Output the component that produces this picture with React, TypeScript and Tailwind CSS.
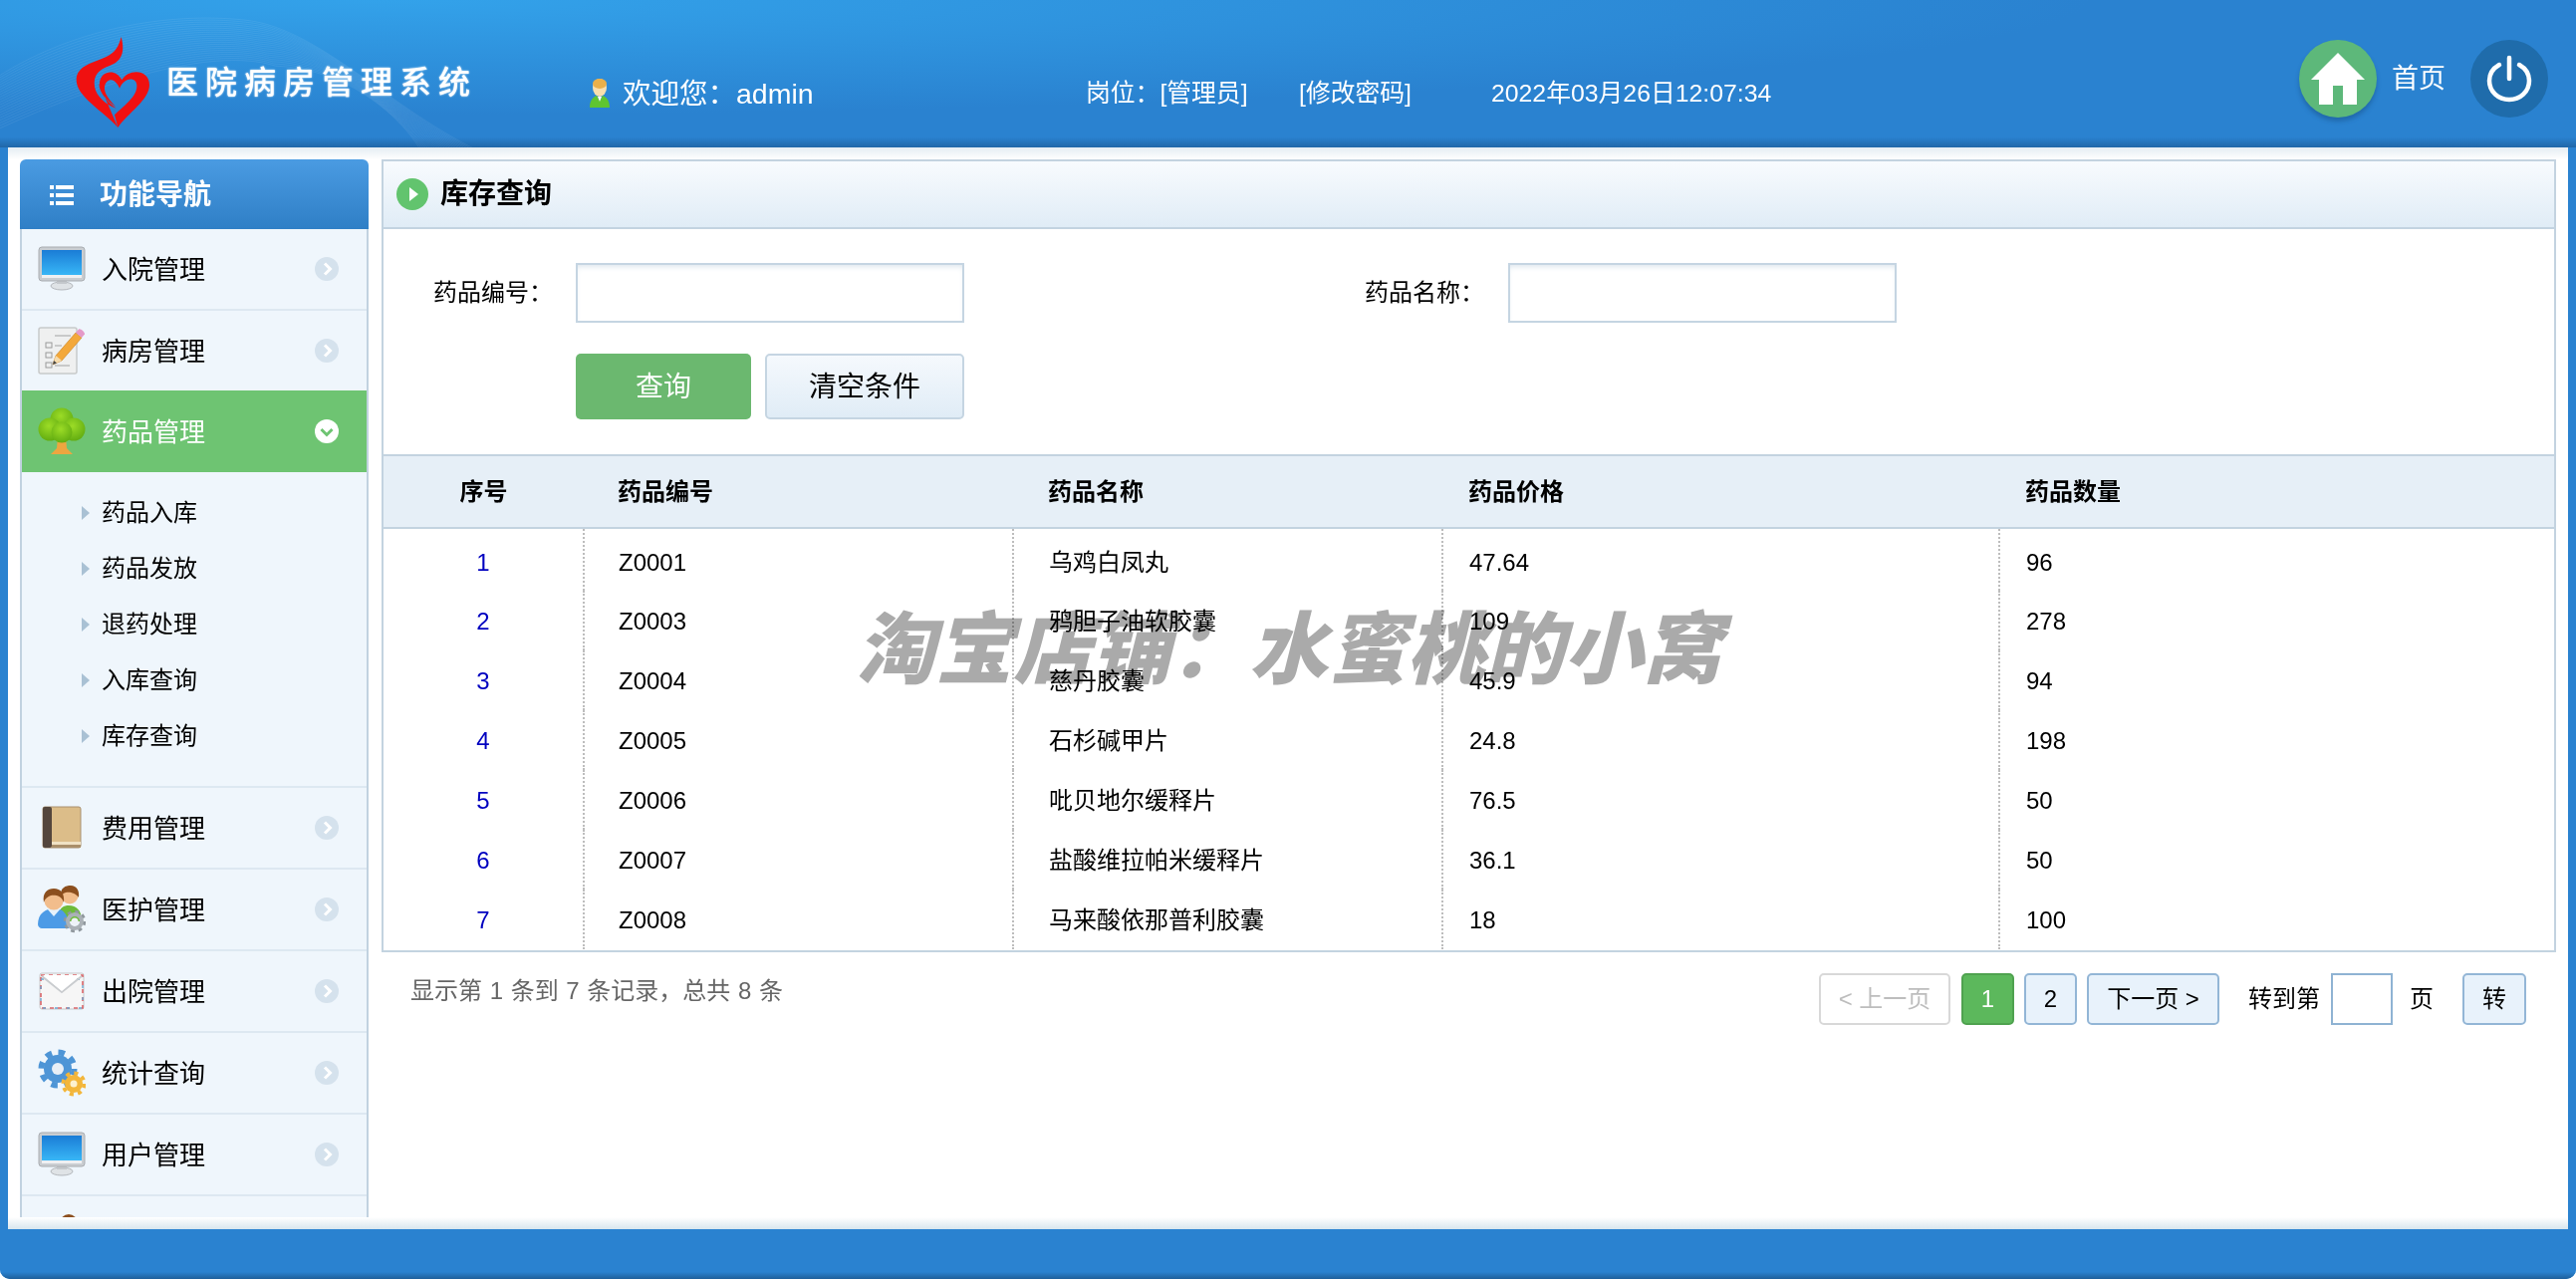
import React from 'react';

const drugs = [
  { id: 1, code: 'Z0001', name: '乌鸡白凤丸', price: '47.64', qty: '96' },
  { id: 2, code: 'Z0003', name: '鸦胆子油软胶囊', price: '109', qty: '278' },
  { id: 3, code: 'Z0004', name: '慈丹胶囊', price: '45.9', qty: '94' },
  { id: 4, code: 'Z0005', name: '石杉碱甲片', price: '24.8', qty: '198' },
  { id: 5, code: 'Z0006', name: '吡贝地尔缓释片', price: '76.5', qty: '50' },
  { id: 6, code: 'Z0007', name: '盐酸维拉帕米缓释片', price: '36.1', qty: '50' },
  { id: 7, code: 'Z0008', name: '马来酸依那普利胶囊', price: '18', qty: '100' },
];

const subMenu = ['药品入库', '药品发放', '退药处理', '入库查询', '库存查询'];

function Logo() {
  return (
    <svg width="74" height="91" viewBox="48 35 222 273" className="shrink-0">
      <path
        fill="#f01010"
        d="M175 308C130 258 50 215 50 165C50 120 105 112 140 95C168 82 178 62 185 35C197 80 188 108 150 122C118 134 100 150 105 185C110 215 140 240 170 250C150 235 118 205 118 175Z"
      />
      <path
        fill="#f01010"
        d="M120 172C125 135 170 130 187 165C205 130 270 130 270 180C270 225 205 265 175 308L165 270C190 245 235 215 232 180C230 155 195 155 180 190C165 155 140 160 135 185C132 205 150 225 168 245C140 225 118 200 120 172Z"
      />
    </svg>
  );
}

function Waves() {
  const lines = Array.from({ length: 22 }, (_, i) => i);
  return (
    <svg className="absolute left-0 top-0" width="520" height="148" viewBox="0 0 520 148">
      {lines.map((i) => (
        <path
          key={i}
          d={`M${-10 - i * 2} ${82 + i * 3.4}C${70 + i} ${28 + i * 2.6} ${170 + i * 2} ${12 + i * 1.6} ${245 + i * 1.5} ${20 + i * 2.2}C${325 + i * 2} ${28 + i * 2} ${400 + i} ${120 + i} ${500 - i * 3.5} 160`}
          fill="none"
          stroke="#ffffff"
          strokeOpacity="0.07"
          strokeWidth="1"
        />
      ))}
    </svg>
  );
}

function UserBadge() {
  return (
    <svg width="22" height="30" viewBox="0 0 22 30" className="shrink-0">
      <ellipse cx="11" cy="9" rx="7" ry="9" fill="#f8dfae" />
      <ellipse cx="11" cy="5" rx="7" ry="5" fill="#eab04a" />
      <path d="M1 29C1 21 5 18 8 17L11 22L14 17C17 18 21 21 21 29Z" fill="#5fc531" />
      <path d="M9 18L11 23L13 18Z" fill="#ffffff" />
    </svg>
  );
}

function Monitor() {
  return (
    <svg width="48" height="48" viewBox="0 0 48 48">
      <defs>
        <linearGradient id="screenBlue" x1="0" y1="0" x2="0" y2="1">
          <stop offset="0" stopColor="#1a7cd6" />
          <stop offset="1" stopColor="#38b6f6" />
        </linearGradient>
      </defs>
      <ellipse cx="24" cy="41" rx="11" ry="4" fill="#dfe3e6" stroke="#b4b8bc" />
      <rect x="19" y="33" width="10" height="6" fill="#c4c8cc" />
      <rect x="1" y="2" width="46" height="34" rx="3" fill="#c9cdd1" stroke="#a9adb1" />
      <rect x="4" y="5" width="40" height="25" fill="url(#screenBlue)" />
      <rect x="4" y="30" width="40" height="3" fill="#eef0f2" />
    </svg>
  );
}

function NotePad() {
  return (
    <svg width="48" height="48" viewBox="0 0 48 48">
      <rect x="1" y="1" width="38" height="46" rx="2" fill="#eff0f0" stroke="#c8caca" strokeWidth="1.5" />
      <rect x="8" y="16" width="6" height="5" fill="none" stroke="#9a9a9a" />
      <rect x="8" y="26" width="6" height="5" fill="none" stroke="#9a9a9a" />
      <rect x="8" y="36" width="6" height="5" fill="none" stroke="#9a9a9a" />
      <path d="M17 39H32M17 19H24M17 9H33" stroke="#bcbcbc" strokeWidth="1.5" />
      <path d="M38 6L44 11L24 34L15 38L18 29Z" fill="#f3a83a" stroke="#c77f1c" strokeWidth="0.6" />
      <path d="M18 29L15 38L24 34Z" fill="#f6dcae" />
      <path d="M15 38L16 34L19 36.5Z" fill="#444444" />
      <path d="M38 6L41 2.5C42.5 1.5 47 5 47 7.5L44 11Z" fill="#e49ac8" />
    </svg>
  );
}

function Tree() {
  return (
    <svg width="48" height="48" viewBox="0 0 48 48">
      <defs>
        <radialGradient id="leaf" cx="0.45" cy="0.35" r="0.75">
          <stop offset="0" stopColor="#9cdc26" />
          <stop offset="1" stopColor="#5aa60e" />
        </radialGradient>
      </defs>
      <path d="M20 30H28L29 41L35 47H13L19 41Z" fill="#eda640" />
      <path d="M23 36L13 28L17 27L23 32ZM25 36L35 28L31 27L25 32Z" fill="#eda640" />
      <circle cx="24" cy="12" r="11.5" fill="url(#leaf)" />
      <circle cx="12" cy="22" r="11.5" fill="url(#leaf)" />
      <circle cx="36" cy="22" r="11.5" fill="url(#leaf)" />
      <circle cx="24" cy="25" r="10.5" fill="url(#leaf)" />
    </svg>
  );
}

function Book() {
  return (
    <svg width="48" height="48" viewBox="0 0 48 48">
      <rect x="5" y="3" width="38" height="41" rx="2" fill="#dcbd89" stroke="#a89070" />
      <rect x="5" y="3" width="9" height="41" rx="2" fill="#54463c" />
      <rect x="14" y="38" width="29" height="3" fill="#f0e2c4" />
      <rect x="14" y="41" width="29" height="3" fill="#a98f6a" />
    </svg>
  );
}

function People() {
  return (
    <svg width="48" height="48" viewBox="0 0 48 48">
      <path d="M20 30C22 22 26 20 31 20C39 20 44 25 44 36H22Z" fill="#6dbb3a" />
      <circle cx="32" cy="10" r="8.5" fill="#f2bd8c" />
      <path d="M23 11C22 2 28 0 33 0C39 0 42 5 41 12C38 7 31 6 28 7C25 8 24 9 23 11Z" fill="#8c4f1e" />
      <path d="M0 39C0 28 8 23 16 23C25 23 31 28 31 43H4C2 43 0 41 0 39Z" fill="#4d9be6" />
      <path d="M9 23L16 31L23 23Z" fill="#e6f2fb" />
      <circle cx="16" cy="15" r="9.5" fill="#f2bd8c" />
      <path d="M6 17C4 7 10 3 16 3C23 3 27 8 26 17C24 10 17 9 13 10C10 11 7 13 6 17Z" fill="#8c4f1e" />
      <circle cx="37" cy="36" r="9" fill="none" stroke="#8f979d" strokeWidth="4.5" strokeDasharray="3.5 3.57" />
      <circle cx="37" cy="36" r="7" fill="none" stroke="#aab1b6" strokeWidth="4" />
      <circle cx="37" cy="36" r="3.5" fill="#eef3f7" />
    </svg>
  );
}

function Envelope() {
  return (
    <svg width="48" height="48" viewBox="0 0 48 48">
      <rect x="2" y="6" width="44" height="36" rx="2" fill="#f6f6f6" stroke="#c6c8ca" />
      <rect x="3" y="8" width="42" height="33" fill="none" stroke="#d9656a" strokeWidth="1.6" strokeDasharray="4 4" />
      <rect x="3" y="12" width="42" height="29" fill="none" stroke="#6ea5cf" strokeWidth="1.4" strokeDasharray="3 9" />
      <path d="M4 9L24 25L44 9" fill="none" stroke="#c9cccf" strokeWidth="2" />
      <path d="M5 8H43L24 24Z" fill="#ffffff" />
    </svg>
  );
}

function Gears() {
  return (
    <svg width="48" height="48" viewBox="0 0 48 48">
      <circle cx="20" cy="20" r="14" fill="#4e95d6" />
      <circle cx="20" cy="20" r="16.5" fill="none" stroke="#4e95d6" strokeWidth="6" strokeDasharray="6.5 6.46" />
      <circle cx="20" cy="20" r="6" fill="#e8eff6" />
      <circle cx="36" cy="35" r="9" fill="#f3b63a" />
      <circle cx="36" cy="35" r="10.5" fill="none" stroke="#f3b63a" strokeWidth="4" strokeDasharray="4 4.25" />
      <circle cx="36" cy="35" r="3.5" fill="#fdf1cf" />
    </svg>
  );
}

function PersonTop() {
  return (
    <svg width="48" height="48" viewBox="0 0 48 48">
      <path d="M2 14H14L14 22H2Z" fill="#dcd2c4" />
      <circle cx="31" cy="10" r="9" fill="#8c4f1e" />
    </svg>
  );
}

function Arrow({ open }: { open?: boolean }) {
  return (
    <svg width="24" height="24" viewBox="0 0 24 24" className="shrink-0">
      <circle cx="12" cy="12" r="12" fill={open ? '#ffffff' : '#d5e2ed'} />
      <path
        d={open ? 'M6.5 10L12 15.5L17.5 10' : 'M10 6.5L15.5 12L10 17.5'}
        fill="none"
        stroke={open ? '#6ec472' : '#ffffff'}
        strokeWidth="3"
      />
    </svg>
  );
}

function NavRow({ icon, label, last }: { icon: React.ReactNode; label: string; last?: boolean }) {
  return (
    <div className={`flex items-center pl-4 pr-7 text-[26px] ${last ? 'h-[80px]' : 'h-[82px] border-b-2 border-[#dde8f1]'}`}>
      <div className="w-12 shrink-0">{icon}</div>
      <span className="ml-4 flex-1 pt-[2px] text-black">{label}</span>
      <Arrow />
    </div>
  );
}

function Sidebar() {
  return (
    <aside className="flex w-[350px] shrink-0 flex-col overflow-hidden">
      <div className="flex h-[70px] shrink-0 items-center rounded-t-[6px] bg-gradient-to-b from-[#4a9be2] to-[#2f7fc6] pl-[30px] pt-[2px] text-[28px] font-bold text-white">
        <svg width="24" height="24" viewBox="0 0 24 24" className="shrink-0">
          <path d="M0 2H4V6H0ZM6 2H24V6H6ZM0 10H4V14H0ZM6 10H24V14H6ZM0 18H4V22H0ZM6 18H24V22H6Z" fill="#ffffff" />
        </svg>
        <span className="ml-[26px]">功能导航</span>
      </div>
      <div className="flex-1 overflow-hidden border-x-2 border-[#c1d2e0] bg-[#eff6fc]">
        <NavRow icon={<Monitor />} label="入院管理" />
        <NavRow icon={<NotePad />} label="病房管理" last />
        <div className="flex h-[82px] items-center bg-[#6ec472] pl-4 pr-7 text-[26px] text-white">
          <div className="w-12 shrink-0">
            <Tree />
          </div>
          <span className="ml-4 flex-1 pt-[2px]">药品管理</span>
          <Arrow open />
        </div>
        <div className="border-b-2 border-[#dde8f1] pb-[22px] pt-[13px]">
          {subMenu.map((item) => (
            <div key={item} className="flex h-14 items-center pl-[60px] text-2xl text-black">
              <span className="h-0 w-0 border-y-[7px] border-l-[8px] border-y-transparent border-l-[#a9c1d4]" />
              <span className="ml-3">{item}</span>
            </div>
          ))}
        </div>
        <NavRow icon={<Book />} label="费用管理" />
        <NavRow icon={<People />} label="医护管理" />
        <NavRow icon={<Envelope />} label="出院管理" />
        <NavRow icon={<Gears />} label="统计查询" />
        <NavRow icon={<Monitor />} label="用户管理" />
        <div className="flex h-[82px] items-center pl-4">
          <PersonTop />
        </div>
      </div>
    </aside>
  );
}

function Pager() {
  const blue = 'flex h-[52px] items-center justify-center rounded-[5px] border-2 border-[#93b6d6] bg-[#e8f2fb] text-black';
  return (
    <div className="flex items-center text-2xl">
      <button className="flex h-[52px] w-[132px] items-center justify-center rounded-[5px] border-2 border-[#d8d8d8] text-[#bdbdbd]">&lt; 上一页</button>
      <button className="ml-[11px] flex h-[52px] w-[53px] items-center justify-center rounded-[5px] border-2 border-[#4fa24f] bg-[#5cb85c] text-white">1</button>
      <button className={`ml-[10px] w-[53px] ${blue}`}>2</button>
      <button className={`ml-[10px] w-[133px] ${blue}`}>下一页 &gt;</button>
      <span className="ml-[29px] text-black">转到第</span>
      <input className="ml-[11px] h-[52px] w-[62px] border-2 border-[#8fb3d3] bg-white outline-none" />
      <span className="ml-[17px] text-black">页</span>
      <button className={`ml-[29px] w-[64px] ${blue}`}>转</button>
    </div>
  );
}

function QueryPanel() {
  const inputCls = 'h-[60px] w-[390px] border-2 border-[#c5d5e2] bg-white outline-none shadow-[inset_0_4px_6px_-3px_#d5e0e9]';
  const headCell = 'h-[73px] text-left text-2xl font-bold text-black';
  const bodyCell = 'h-[60px] border-l-2 border-dotted border-[#bdbdbd] pt-[2px] text-2xl text-black';
  return (
    <main className="relative flex min-w-0 flex-1 flex-col">
      <section className="h-[796px] border-2 border-[#c3d3e0] bg-white">
        <div className="flex h-[68px] items-center border-b-2 border-[#c3d3e0] bg-gradient-to-b from-[#f8fbfe] to-[#e0ecf6] pl-[13px]">
          <svg width="32" height="32" viewBox="0 0 32 32" className="shrink-0">
            <circle cx="16" cy="16" r="16" fill="#62c46e" />
            <path d="M13 9L22 16L13 23Z" fill="#ffffff" />
          </svg>
          <h2 className="ml-[12px] text-[28px] font-bold text-black">库存查询</h2>
        </div>

        <div className="flex items-center pl-[50px] pt-[34px] text-2xl text-black">
          <label className="w-[143px]">药品编号：</label>
          <input className={inputCls} />
          <label className="ml-[402px] w-[144px]">药品名称：</label>
          <input className={inputCls} />
        </div>
        <div className="flex gap-[14px] pb-[35px] pl-[193px] pt-[31px] text-[28px]">
          <button className="h-[66px] w-[176px] rounded-[5px] bg-[#6bb86f] pt-[2px] text-white">查询</button>
          <button className="h-[66px] w-[200px] rounded-[5px] border-2 border-[#c5d5e2] bg-gradient-to-b from-[#f5f9fd] to-[#e0ecf6] pt-[2px] text-black">清空条件</button>
        </div>

        <table className="w-full table-fixed border-collapse">
          <thead className="border-y-2 border-[#c3d3e0] bg-[#e6eff7]">
            <tr>
              <th className={`w-[201px] !text-center ${headCell}`}>序号</th>
              <th className={`w-[431px] pl-[34px] ${headCell}`}>药品编号</th>
              <th className={`w-[431px] pl-[35px] ${headCell}`}>药品名称</th>
              <th className={`w-[559px] pl-[26px] ${headCell}`}>药品价格</th>
              <th className={`pl-[26px] ${headCell}`}>药品数量</th>
            </tr>
          </thead>
          <tbody>
            {drugs.map((d) => (
              <tr key={d.id} className="[&:first-child>td]:h-[63px] [&:first-child>td]:pt-[6px]">
                <td className="h-[60px] pt-[2px] text-center text-2xl text-[#0000c0]">{d.id}</td>
                <td className={`pl-[34px] ${bodyCell}`}>{d.code}</td>
                <td className={`pl-[35px] ${bodyCell}`}>{d.name}</td>
                <td className={`pl-[26px] ${bodyCell}`}>{d.price}</td>
                <td className={`pl-[26px] ${bodyCell}`}>{d.qty}</td>
              </tr>
            ))}
          </tbody>
        </table>
      </section>

      <div className="mt-[21px] flex items-start justify-between pl-[29px] pr-[30px]">
        <p className="text-2xl leading-9 text-[#666666] [word-spacing:1px]">显示第 1 条到 7 条记录，总共 8 条</p>
        <Pager />
      </div>

      {/* watermark sits over the table */}
      <div className="absolute left-[476px] top-[449px] whitespace-nowrap text-[79px] font-black italic leading-[88px] text-[#aaaaaa] mix-blend-multiply">
        淘宝店铺：水蜜桃的小窝
      </div>
    </main>
  );
}

export default function App() {
  return (
    <div className="flex h-[1284px] w-[2586px] flex-col overflow-hidden rounded-b-[10px] bg-[#2a82d0] font-['Liberation_Sans','Noto_Sans_CJK_SC',sans-serif]">
      <header className="relative flex h-[148px] shrink-0 items-start overflow-hidden bg-[linear-gradient(to_bottom,transparent_93%,rgba(20,70,120,0.45)),radial-gradient(ellipse_at_15%_0%,#33a2ea,#2a82d0_55%)] text-white">
        <Waves />
        <div className="relative flex w-[591px] shrink-0 items-start pl-[76px] pt-[37px]">
          <Logo />
          <h1 className="ml-[17px] mt-[26px] whitespace-nowrap text-[32px] font-medium leading-[40px] tracking-[7px] [text-shadow:0_0_2px_#ffffff]">
            医院病房管理系统
          </h1>
        </div>
        <div className="relative flex w-[499px] shrink-0 items-center gap-3 pt-[78px] text-[28.5px] leading-[32px]">
          <UserBadge />
          <span>欢迎您：admin</span>
        </div>
        <div className="relative flex items-center pt-[79px] text-[24.8px] leading-[30px]">
          <span className="w-[214px]">岗位：[管理员]</span>
          <span className="w-[193px]">[修改密码]</span>
          <span>2022年03月26日12:07:34</span>
        </div>
        <div className="relative ml-auto flex items-center pr-7 pt-10">
          <div className="flex h-[78px] w-[78px] items-center justify-center rounded-full bg-[#5db87a] shadow-[0_4px_4px_rgba(20,70,120,0.4)]">
            <svg width="54" height="52" viewBox="0 0 54 52">
              <path d="M27 0L54 27H46V52H32V33H22V52H8V27H0Z" fill="#ffffff" />
            </svg>
          </div>
          <span className="ml-[15px] text-[27px]">首页</span>
          <div className="ml-[25px] flex h-[78px] w-[78px] items-center justify-center rounded-full bg-[#1f6cab]">
            <svg width="46" height="48" viewBox="0 0 46 48" fill="none" stroke="#ffffff" strokeWidth="4.5" strokeLinecap="round">
              <path d="M23 3V24" />
              <path d="M13 10C6 14 3 20 3 26C3 37 12 45 23 45C34 45 43 37 43 26C43 20 40 14 33 10" />
            </svg>
          </div>
        </div>
      </header>

      <div className="mx-2 flex min-h-0 flex-1 flex-col bg-white">
        <div className="h-3 shrink-0 bg-gradient-to-b from-[#e4edf3] to-white" />
        <div className="flex min-h-0 flex-1 gap-[13px] px-3">
          <Sidebar />
          <QueryPanel />
        </div>
        <div className="h-3 shrink-0 bg-gradient-to-b from-white to-[#d8e6ee]" />
      </div>

      <footer className="h-[50px] shrink-0 bg-[linear-gradient(to_bottom,#2a82d0_86%,#1e5f9a)]" />
    </div>
  );
}
